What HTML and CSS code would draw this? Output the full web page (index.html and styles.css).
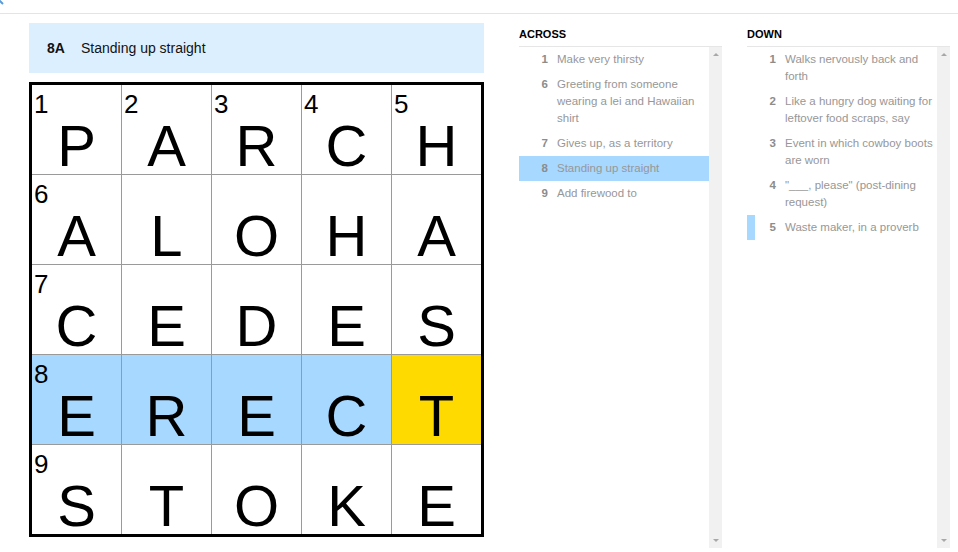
FILE: index.html
```html
<!DOCTYPE html>
<html lang="en">
<head>
    <meta charset="UTF-8">
    <meta name="viewport" content="width=device-width, initial-scale=1.0">
    <title>Mini Crossword</title>
    <link rel="stylesheet" href="styles.css">
</head>
<body>

    <header class="topbar">
        <svg class="corner" width="6" height="6" viewBox="0 0 6 6"><path d="M-1 0 L3 4" stroke="#5b9bd9" stroke-width="2" fill="none"/></svg>
    </header>

    <main class="layout">
        <!-- Board with current clue -->
        <section class="board">
            <div class="clue-bar">
                <span class="clue-label">8A</span>
                <span class="clue-text">Standing up straight</span>
            </div>

            <div class="grid">
                <div class="cell"><span class="num">1</span><span class="letter">P</span></div>
                <div class="cell"><span class="num">2</span><span class="letter">A</span></div>
                <div class="cell"><span class="num">3</span><span class="letter">R</span></div>
                <div class="cell"><span class="num">4</span><span class="letter">C</span></div>
                <div class="cell"><span class="num">5</span><span class="letter">H</span></div>

                <div class="cell"><span class="num">6</span><span class="letter">A</span></div>
                <div class="cell"><span class="num"></span><span class="letter">L</span></div>
                <div class="cell"><span class="num"></span><span class="letter">O</span></div>
                <div class="cell"><span class="num"></span><span class="letter">H</span></div>
                <div class="cell"><span class="num"></span><span class="letter">A</span></div>

                <div class="cell"><span class="num">7</span><span class="letter">C</span></div>
                <div class="cell"><span class="num"></span><span class="letter">E</span></div>
                <div class="cell"><span class="num"></span><span class="letter">D</span></div>
                <div class="cell"><span class="num"></span><span class="letter">E</span></div>
                <div class="cell"><span class="num"></span><span class="letter">S</span></div>

                <div class="cell word"><span class="num">8</span><span class="letter">E</span></div>
                <div class="cell word"><span class="num"></span><span class="letter">R</span></div>
                <div class="cell word"><span class="num"></span><span class="letter">E</span></div>
                <div class="cell word"><span class="num"></span><span class="letter">C</span></div>
                <div class="cell active"><span class="num"></span><span class="letter">T</span></div>

                <div class="cell"><span class="num">9</span><span class="letter">S</span></div>
                <div class="cell"><span class="num"></span><span class="letter">T</span></div>
                <div class="cell"><span class="num"></span><span class="letter">O</span></div>
                <div class="cell"><span class="num"></span><span class="letter">K</span></div>
                <div class="cell"><span class="num"></span><span class="letter">E</span></div>
            </div>
        </section>

        <!-- Across clues -->
        <section class="clue-col across">
            <h3 class="clue-head">Across</h3>
            <div class="clue-body">
                <ol class="clue-list">
                    <li class="clue"><span class="clue-num">1</span><span class="clue-txt">Make very thirsty</span></li>
                    <li class="clue"><span class="clue-num">6</span><span class="clue-txt">Greeting from someone wearing a lei and Hawaiian shirt</span></li>
                    <li class="clue"><span class="clue-num">7</span><span class="clue-txt">Gives up, as a territory</span></li>
                    <li class="clue current"><span class="clue-num">8</span><span class="clue-txt">Standing up straight</span></li>
                    <li class="clue"><span class="clue-num">9</span><span class="clue-txt">Add firewood to</span></li>
                </ol>
                <div class="track"><span class="arrow up"></span><span class="arrow down"></span></div>
            </div>
        </section>

        <!-- Down clues -->
        <section class="clue-col down">
            <h3 class="clue-head">Down</h3>
            <div class="clue-body">
                <ol class="clue-list">
                    <li class="clue"><span class="clue-num">1</span><span class="clue-txt">Walks nervously back and forth</span></li>
                    <li class="clue"><span class="clue-num">2</span><span class="clue-txt">Like a hungry dog waiting for leftover food scraps, say</span></li>
                    <li class="clue"><span class="clue-num">3</span><span class="clue-txt">Event in which cowboy boots are worn</span></li>
                    <li class="clue"><span class="clue-num">4</span><span class="clue-txt">"___, please" (post-dining request)</span></li>
                    <li class="clue cross"><span class="clue-num">5</span><span class="clue-txt">Waste maker, in a proverb</span></li>
                </ol>
                <div class="track"><span class="arrow up"></span><span class="arrow down"></span></div>
            </div>
        </section>
    </main>

</body>
</html>
```

FILE: styles.css
```css
/* Page */
body {
    margin: 0;
    font-family: 'Liberation Sans', Arial, sans-serif;
    color: #121212;
    background: #fff;
    overflow: hidden;
}
.topbar {
    height: 13px;
    border-bottom: 1px solid #e4e4e4;
}
.corner {
    display: block;
}
.layout {
    display: flex;
    height: 538px;
    box-sizing: border-box;
    padding: 9px 0 4px 29px;
}

/* Board */
.board {
    width: 455px;
    display: flex;
    flex-direction: column;
    gap: 9px;
}
.clue-bar {
    height: 50px;
    background-color: #dcefff;
    display: flex;
    align-items: center;
    padding-left: 18px;
    font-size: 14px;
}
.clue-label {
    width: 34px;
    font-weight: bold;
}
.grid {
    display: grid;
    grid-template-columns: repeat(5, 89px);
    grid-auto-rows: 89px;
    gap: 1px;
    background-color: #9a9a9a;
    border: 3px solid #000;
    width: fit-content;
}
.cell {
    background-color: #fff;
    display: flex;
    flex-direction: column;
    color: #000;
}
.cell.word {
    background-color: #a7d8ff;
}
.cell.active {
    background-color: #ffda00;
}
.num {
    height: 26px;
    padding: 6px 0 0 2px;
    font-size: 26px;
    line-height: 26px;
}
.letter {
    margin-top: 1px;
    font-size: 58px;
    line-height: 56px;
    text-align: center;
}

/* Clue lists */
.clue-col {
    width: 203px;
    display: flex;
    flex-direction: column;
}
.clue-col.across {
    margin-left: 35px;
}
.clue-col.down {
    margin-left: 25px;
}
.clue-head {
    margin: 0;
    padding: 4px 0 5px;
    font-size: 11px;
    line-height: 14px;
    font-weight: bold;
    text-transform: uppercase;
    color: #000;
    border-bottom: 1px solid #e6e6e6;
}
.clue-body {
    flex: 1;
    display: flex;
}
.clue-list {
    list-style: none;
    margin: 0;
    padding: 0;
    width: 190px;
}
.clue {
    display: flex;
    padding: 4px 0;
    font-size: 11.5px;
    line-height: 17px;
    color: #979797;
}
.clue.current {
    background-color: #a7d8ff;
}
.clue.cross {
    box-shadow: inset 8px 0 0 #a7d8ff;
}
.clue-num {
    flex: none;
    width: 29px;
    margin-right: 9px;
    text-align: right;
    font-weight: bold;
    color: #8c8c8c;
}
.clue-txt {
    flex: 1;
}
.track {
    width: 13px;
    background-color: #f1f1f1;
    display: flex;
    flex-direction: column;
    justify-content: space-between;
    align-items: center;
    padding: 6px 0 6px;
    box-sizing: border-box;
}
.arrow {
    width: 0;
    height: 0;
    border-left: 3px solid transparent;
    border-right: 3px solid transparent;
}
.arrow.up {
    border-bottom: 3px solid #a8a8a8;
}
.arrow.down {
    border-top: 3px solid #a8a8a8;
}
```
